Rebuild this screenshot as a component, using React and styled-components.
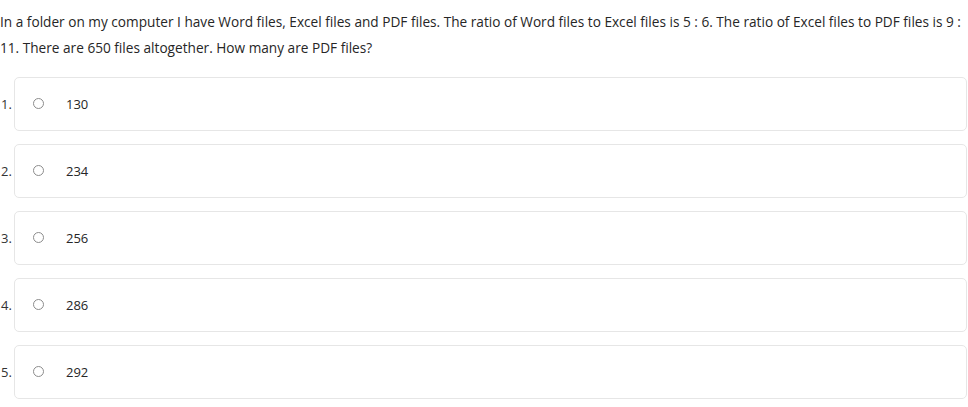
import React from "react";
import styled, { createGlobalStyle } from "styled-components";

const GlobalStyle = createGlobalStyle`
  html, body {
    margin: 0;
    padding: 0;
    background: #ffffff;
  }
  body {
    font-family: "Segoe UI", "Open Sans", "Noto Sans", sans-serif;
    color: #222222;
  }
`;

const Page = styled.div`
  width: 968px;
  padding-top: 9px;
  box-sizing: border-box;
`;

const Question = styled.p`
  margin: 0 0 16px 0;
  font-size: 13.65px;
  line-height: 26px;
  color: #262626;
`;

const OptionList = styled.ol`
  list-style: none;
  margin: 0;
  padding: 0;
  display: flex;
  flex-direction: column;
  gap: 13px;
`;

const OptionRow = styled.li`
  display: flex;
  align-items: center;
`;

const Index = styled.span`
  width: 14px;
  flex: none;
  font-size: 13px;
  color: #333333;
  padding-left: 1px;
  box-sizing: border-box;
`;

const Card = styled.label`
  flex: 1;
  margin-right: 1px;
  height: 54px;
  box-sizing: border-box;
  border: 1px solid #e6e6e6;
  border-radius: 5px;
  display: flex;
  align-items: center;
  padding-left: 18px;
  cursor: pointer;
`;

const Radio = styled.span`
  width: 11px;
  height: 11px;
  box-sizing: border-box;
  border: 1px solid #8c8c8c;
  border-radius: 50%;
  flex: none;
  margin-top: -2px;
`;

const Answer = styled.span`
  margin-left: 22px;
  font-size: 13px;
  color: #262626;
`;

const options = ["130", "234", "256", "286", "292"];

export default function App() {
  return (
    <Page>
      <GlobalStyle />
      <Question>
        In a folder on my computer I have Word files, Excel files and PDF files. The ratio of Word files to Excel files is 5 : 6. The ratio of Excel files to PDF files is 9&nbsp;: 11. There are 650 files altogether. How many are PDF files?
      </Question>
      <OptionList>
        {options.map((opt, i) => (
          <OptionRow key={opt}>
            <Index>{i + 1}.</Index>
            <Card>
              <Radio />
              <Answer>{opt}</Answer>
            </Card>
          </OptionRow>
        ))}
      </OptionList>
    </Page>
  );
}
